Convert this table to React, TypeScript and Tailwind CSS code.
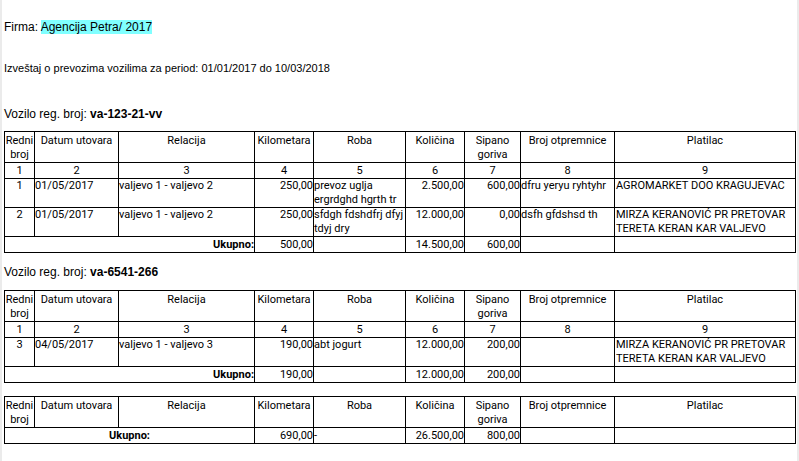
import React from "react";

const COLS = "grid-cols-[29px_83px_135px_58px_91px_58px_55px_93px_180px]";

const headers = [
  "Redni broj",
  "Datum utovara",
  "Relacija",
  "Kilometara",
  "Roba",
  "Količina",
  "Sipano goriva",
  "Broj otpremnice",
  "Platilac",
];

type Row = string[];

const cellBase = "bg-white text-black leading-[14px] overflow-hidden";

function HeaderRow() {
  return (
    <>
      {headers.map((h) => (
        <div key={h} className="bg-white text-black leading-[14px] text-center h-[30px] pt-[2px]">
          {h === "Redni broj" ? (
            <>
              Redni
              <br />
              broj
            </>
          ) : h === "Sipano goriva" ? (
            <>
              Sipano
              <br />
              goriva
            </>
          ) : (
            h
          )}
        </div>
      ))}
    </>
  );
}

function NumberRow() {
  return (
    <>
      {[1, 2, 3, 4, 5, 6, 7, 8, 9].map((n) => (
        <div key={n} className={`${cellBase} text-center h-[15px] leading-[15px]`}>
          {n}
        </div>
      ))}
    </>
  );
}

const align = [
  "text-center",
  "text-left",
  "text-left",
  "text-right",
  "text-left",
  "text-right",
  "text-right",
  "text-left",
  "text-left",
];

function DataRow({ row }: { row: Row }) {
  return (
    <>
      {row.map((c, i) => (
        <div key={i} className={`${cellBase} ${align[i]} min-h-[28px] ${i === 8 ? "pl-[1px]" : ""}`}>
          {c}
        </div>
      ))}
    </>
  );
}

function TotalRow({
  km,
  kol,
  sip,
  center,
  roba,
}: {
  km: string;
  kol: string;
  sip: string;
  center?: boolean;
  roba?: string;
}) {
  return (
    <>
      <div className={`${cellBase} col-span-3 font-bold h-[15px] leading-[15px] ${center ? "text-center" : "text-right"}`}>
        Ukupno:
      </div>
      <div className={`${cellBase} text-right h-[15px] leading-[15px]`}>{km}</div>
      <div className={`${cellBase} text-left h-[15px] leading-[15px]`}>{roba ?? ""}</div>
      <div className={`${cellBase} text-right h-[15px] leading-[15px]`}>{kol}</div>
      <div className={`${cellBase} text-right h-[15px] leading-[15px]`}>{sip}</div>
      <div className={`${cellBase} h-[15px]`} />
      <div className={`${cellBase} h-[15px]`} />
    </>
  );
}

function Grid({ children }: { children: React.ReactNode }) {
  return (
    <div
      className={`grid ${COLS} gap-[1px] p-[1px] bg-black w-[792px] text-[11px]`}
      style={{ fontFamily: "Roboto, 'Liberation Sans', sans-serif" }}
    >
      {children}
    </div>
  );
}

export default function App() {
  return (
    <div className="min-h-screen bg-white flex" style={{ fontFamily: "'Liberation Sans', Arial, sans-serif" }}>
      <div className="w-[2px] bg-[#ebebeb] shrink-0" />
      <div className="pl-[2px] w-[795px] shrink-0">
        <div className="mt-[19px] text-[12px] leading-[16px] text-black">
          Firma: <span className="bg-[#80ffff]">Agencija Petra/ 2017</span>
        </div>
        <div className="mt-[26px] text-[11px] leading-[14px] text-black">
          Izveštaj o prevozima vozilima za period: 01/01/2017 do 10/03/2018
        </div>
        <div className="mt-[31px] text-[12px] leading-[16px] text-black">
          Vozilo reg. broj: <span className="font-bold">va-123-21-vv</span>
        </div>
        <div className="mt-[9px]">
          <Grid>
            <HeaderRow />
            <NumberRow />
            <DataRow
              row={[
                "1",
                "01/05/2017",
                "valjevo 1 - valjevo 2",
                "250,00",
                "prevoz uglja ergrdghd hgrth tr",
                "2.500,00",
                "600,00",
                "dfru yeryu ryhtyhr",
                "AGROMARKET DOO KRAGUJEVAC",
              ]}
            />
            <DataRow
              row={[
                "2",
                "01/05/2017",
                "valjevo 1 - valjevo 2",
                "250,00",
                "sfdgh fdshdfrj dfyj tdyj dry",
                "12.000,00",
                "0,00",
                "dsfh gfdshsd th",
                "MIRZA KERANOVIĆ PR PRETOVAR TERETA KERAN KAR VALJEVO",
              ]}
            />
            <TotalRow km="500,00" kol="14.500,00" sip="600,00" />
          </Grid>
        </div>
        <div className="mt-[11px] text-[12px] leading-[16px] text-black">
          Vozilo reg. broj: <span className="font-bold">va-6541-266</span>
        </div>
        <div className="mt-[10px]">
          <Grid>
            <HeaderRow />
            <NumberRow />
            <DataRow
              row={[
                "3",
                "04/05/2017",
                "valjevo 1 - valjevo 3",
                "190,00",
                "abt jogurt",
                "12.000,00",
                "200,00",
                "",
                "MIRZA KERANOVIĆ PR PRETOVAR TERETA KERAN KAR VALJEVO",
              ]}
            />
            <TotalRow km="190,00" kol="12.000,00" sip="200,00" />
          </Grid>
        </div>
        <div className="mt-[13px]">
          <Grid>
            <HeaderRow />
            <TotalRow km="690,00" kol="26.500,00" sip="800,00" center roba="-" />
          </Grid>
        </div>
      </div>
      <div className="flex-1" />
      <div className="w-[2px] bg-[#ebebeb] shrink-0" />
    </div>
  );
}
